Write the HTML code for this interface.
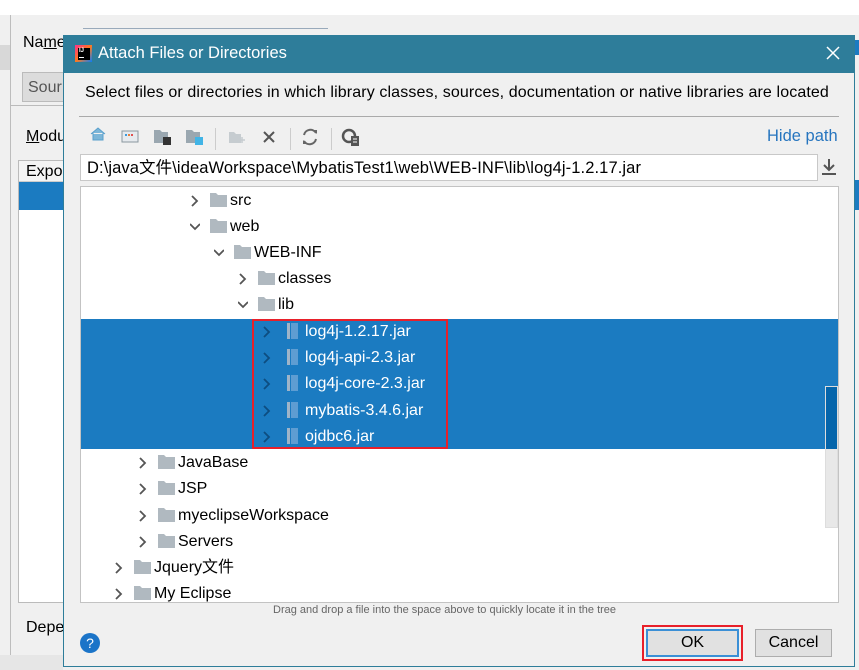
<!DOCTYPE html>
<html><head><meta charset="utf-8"><style>
*{margin:0;padding:0;box-sizing:border-box}
body{width:859px;height:670px;overflow:hidden;background:#f0f0f0;position:relative;font-family:"Liberation Sans","Noto Sans CJK SC",sans-serif;color:#000}
.a{position:absolute}
.t{font-size:15px;white-space:nowrap}
.row{position:absolute;height:26px;left:0;right:0}
.row span{position:absolute;top:5px;font-size:16px;line-height:18px;white-space:nowrap}
.fd{position:absolute;top:6px;width:17px;height:14px}
.ch{position:absolute;top:8px;width:10px;height:12px}
</style></head><body>
<div class="a" style="left:0;top:0;width:859px;height:15px;background:#fff"></div>
<div class="a" style="left:10px;top:15px;width:1px;height:655px;background:#bdbdbd"></div>
<div class="a" style="left:0;top:45px;width:10px;height:25px;background:#d8d8d8"></div>
<div class="a t" style="left:23px;top:34px;font-size:16px">Na<u>m</u>e</div>
<div class="a" style="left:83px;top:28px;width:245px;height:8px;border-top:1px solid #9ab;"></div>
<div class="a" style="left:22px;top:72px;width:45px;height:30px;background:#dcdcdc;border:1px solid #bbb"></div>
<div class="a t" style="left:28px;top:79px;color:#555;font-size:16px">Sour</div>
<div class="a" style="left:10px;top:105px;width:60px;height:1px;background:#bbb"></div>
<div class="a t" style="left:26px;top:128px;font-size:16px"><u>M</u>odu</div>
<div class="a" style="left:18px;top:160px;width:46px;height:443px;background:#fff;border:1px solid #bbb"></div>
<div class="a" style="left:19px;top:161px;width:45px;height:21px;background:#f4f4f4;border-bottom:1px solid #ccc"></div>
<div class="a t" style="left:26px;top:163px;font-size:16px">Expo</div>
<div class="a" style="left:19px;top:182px;width:45px;height:28px;background:#1b7bc1"></div>
<div class="a t" style="left:26px;top:619px;font-size:16px">Depe</div>
<div class="a" style="left:0;top:655px;width:63px;height:15px;background:#e6e6e6"></div>
<div class="a" style="left:855px;top:40px;width:4px;height:15px;background:#1b7bc1"></div>
<div class="a" style="left:855px;top:180px;width:4px;height:30px;background:#1b7bc1"></div>

<div class="a" style="left:63px;top:35px;width:792px;height:632px;background:#f0f0f0;border:1px solid #2e7d9a"></div>
<div class="a" style="left:63px;top:35px;width:792px;height:38px;background:#2e7d9a"></div>
<div class="a" style="left:75px;top:45px;width:17px;height:17px;background:linear-gradient(135deg,#ff318c,#fe7a1e 50%,#087cfa);"></div>
<div class="a" style="left:78px;top:48px;width:12px;height:12px;background:#000;color:#fff;font-size:6px;font-weight:bold;line-height:7px;padding-left:1px">IJ<div style="width:5px;height:1px;background:#fff;margin-top:2px"></div></div>
<div class="a" style="left:98px;top:44px;color:#fff;font-size:16.5px">Attach Files or Directories</div>
<svg class="a" style="left:826px;top:46px" width="14" height="14"><path d="M1 1L13 13M13 1L1 13" stroke="#fff" stroke-width="1.5"/></svg>
<div class="a" style="left:85px;top:84px;font-size:16px;white-space:nowrap;letter-spacing:0.12px">Select files or directories in which library classes, sources, documentation or native libraries are located</div>
<div class="a" style="left:79px;top:116px;width:760px;height:1px;background:#aaa"></div>
<svg class="a" style="left:80px;top:120px" width="300" height="35">
 <path d="M11 14L18 8L25 14M13 13V20H23V13" fill="#7cb6d8" stroke="#5aa0cc"/>
 <rect x="42" y="11" width="16" height="11" fill="#e6eaee" stroke="#8a979f"/><rect x="45" y="14" width="2" height="2" fill="#3b9adb"/><rect x="48" y="14" width="2" height="2" fill="#e67e3b"/><rect x="51" y="14" width="2" height="2" fill="#e05050"/>
 <path d="M74 10h6l2 2h6v11h-14z" fill="#9aa7b0"/><rect x="83" y="17" width="8" height="8" fill="#333"/>
 <path d="M106 10h6l2 2h6v11h-14z" fill="#9aa7b0"/><rect x="115" y="17" width="8" height="8" fill="#41b4e6"/>
 <rect x="135" y="8" width="1" height="22" fill="#ccc"/>
 <path d="M149 12h5l2 2h5v9h-12z" fill="#c6ccd0"/><path d="M159 20h6M162 17v6" stroke="#c6ccd0" stroke-width="1.5"/>
 <path d="M184 12l10 10M194 12l-10 10" stroke="#555" stroke-width="2"/>
 <rect x="210" y="8" width="1" height="22" fill="#ccc"/>
 <path d="M236 13a6.5 6.5 0 0 0-12 2M224 21a6.5 6.5 0 0 0 12-2" fill="none" stroke="#666" stroke-width="2"/><path d="M233 10l4 0 0 4zM227 24l-4 0 0-4z" fill="#666"/>
 <rect x="251" y="8" width="1" height="22" fill="#ccc"/>
 <circle cx="269" cy="16" r="6" fill="none" stroke="#555" stroke-width="2.5"/><rect x="271" y="16" width="8" height="10" fill="#555"/><path d="M273 19h4M273 22h4" stroke="#fff"/>
</svg>
<div class="a" style="left:767px;top:127px;color:#2675bf;font-size:16.5px">Hide path</div>
<div class="a" style="left:80px;top:154px;width:738px;height:27px;background:#fff;border:1px solid #c8c8c8"></div>
<div class="a" style="left:87px;top:158px;font-size:16.5px;line-height:20px;white-space:nowrap;letter-spacing:0.1px">D:\java文件\ideaWorkspace\MybatisTest1\web\WEB-INF\lib\log4j-1.2.17.jar</div>
<svg class="a" style="left:821px;top:158px" width="16" height="18"><path d="M8 1v10M3 7l5 5 5-5" fill="none" stroke="#555" stroke-width="2"/><rect x="1" y="15" width="14" height="2" fill="#555"/></svg>
<div class="a" style="left:80px;top:186px;width:759px;height:417px;background:#fff;border:1px solid #c3c3c3;overflow:hidden">
 <div class="a" style="left:0;top:132px;width:759px;height:130px;background:#1b7bc1"></div>
 <div class="a" style="left:744px;top:199px;width:13px;height:142px;background:#e8e8e8;border:1px solid #ddd"></div>
 <div class="a" style="left:745px;top:200px;width:11px;height:62px;background:#0565ab"></div>
 <div class="a" style="left:171px;top:132px;width:196px;height:130px;border:2px solid #e8202a"></div>
</div>
<div id="tree" class="a" style="left:80px;top:187px;width:744px;height:415px;overflow:hidden"></div>
<div class="a" style="left:273px;top:604px;font-size:11px;color:#666">Drag and drop a file into the space above to quickly locate it in the tree</div>
<div class="a" style="left:80px;top:633px;width:20px;height:20px;border-radius:50%;background:#1b74c8;color:#fff;font-size:14px;text-align:center;line-height:20px">?</div>
<div class="a" style="left:642px;top:625px;width:101px;height:36px;border:2px solid #e8202a"></div>
<div class="a" style="left:646px;top:629px;width:93px;height:28px;background:#e1e1e1;border:2px solid #3a8fd6;font-size:16px;text-align:center;line-height:24px">OK</div>
<div class="a" style="left:755px;top:629px;width:77px;height:28px;background:#e1e1e1;border:1px solid #adadad;font-size:16px;text-align:center;line-height:26px">Cancel</div>
<script>
var rows=[
[13,'r',190,'f','src'],[39,'d',190,'f','web'],[65,'d',214,'f','WEB-INF'],[91,'r',238,'f','classes'],[117,'d',238,'f','lib'],
[144,'r',262,'j','log4j-1.2.17.jar'],[170,'r',262,'j','log4j-api-2.3.jar'],[196,'r',262,'j','log4j-core-2.3.jar'],[223,'r',262,'j','mybatis-3.4.6.jar'],[249,'r',262,'j','ojdbc6.jar'],
[275,'r',138,'f','JavaBase'],[301,'r',138,'f','JSP'],[328,'r',138,'f','myeclipseWorkspace'],[354,'r',138,'f','Servers'],[380,'r',114,'f','Jquery文件'],[406,'r',114,'f','My Eclipse']];
var h='';
rows.forEach(function(r){
 var cx=r[2]-80, sel=r[3]=='j';
 var top=r[0]-13;
 var col=sel?'#0e4d80':'#555';
 var chev=r[1]=='r'?'<path d="M2 1l5 5-5 5" fill="none" stroke="'+col+'" stroke-width="1.8"/>':'<path d="M0 3l5 5 5-5" fill="none" stroke="'+col+'" stroke-width="1.8"/>';
 var icon=sel?'<svg class="fd" style="left:'+(cx+24)+'px;width:14px;top:5px;height:16px" width="14" height="16"><rect x="1" y="0" width="3" height="16" fill="#9fb4c8"/><rect x="5" y="0" width="7" height="16" fill="#6fa6d6" opacity=".8"/></svg>'
 :'<svg class="fd" style="left:'+(cx+20)+'px" width="17" height="14"><path d="M0 0h6l2 2h9v12H0z" fill="#b0b9c0"/></svg>';
 h+='<div class="row" style="top:'+top+'px"><svg class="ch" style="left:'+cx+'px" width="10" height="12">'+chev+'</svg>'+icon+'<span style="left:'+(cx+(sel?43:40))+'px;color:'+(sel?'#fff':'#000')+'">'+r[4]+'</span></div>';
});
document.getElementById('tree').innerHTML=h;
</script>
</body></html>
